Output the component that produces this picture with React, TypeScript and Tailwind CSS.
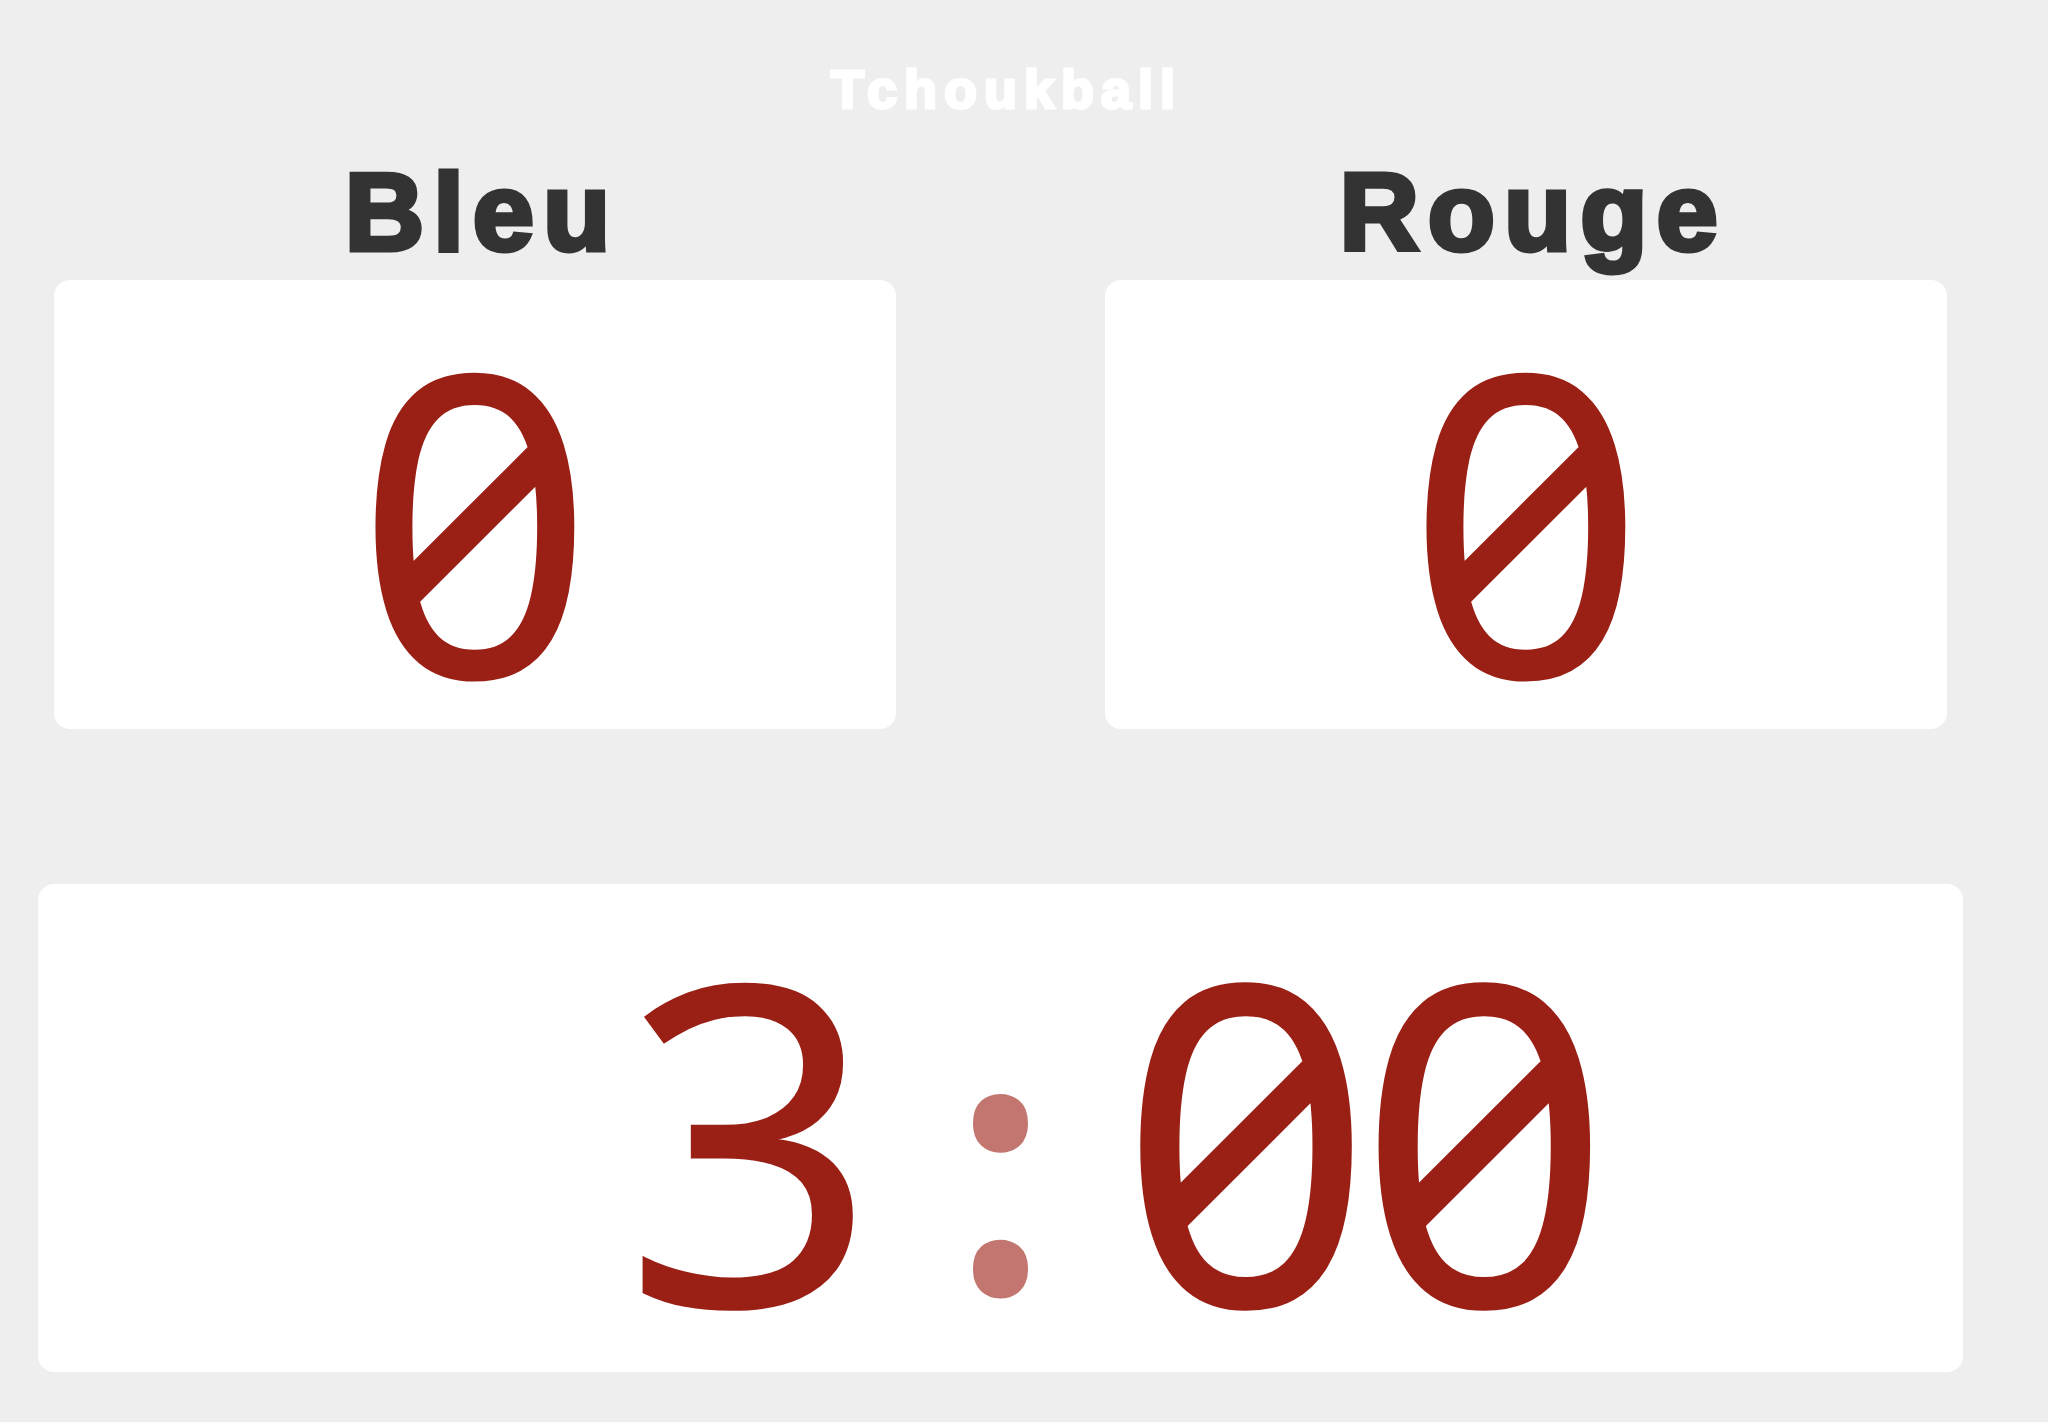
// Tableau de score Tchoukball
const digitFont = "font-['Open_Sans',sans-serif] [font-feature-settings:'zero'_1,'tnum'_1] text-[#9a2016] leading-none [-webkit-text-stroke:3px_#9a2016]";

function TeamScore({ name, score }: { name: string; score: number }) {
  return (
    <div className="flex flex-col items-center w-[842px]">
      <h2 className="mt-[41px] h-[110px] pl-[14px] text-[110px] leading-none font-bold font-['Liberation_Sans',Arial,sans-serif] text-[#333333] tracking-[9px] [-webkit-text-stroke:5px_#333333]">
        {name}
      </h2>
      <div className="mt-[13px] w-full h-[449px] bg-white rounded-2xl flex justify-center pt-[27px]">
        <span className={`${digitFont} text-[416px]`}>{score}</span>
      </div>
    </div>
  );
}

export default function App() {
  return (
    <div className="min-h-screen bg-[#eeeeee] pl-[38px]">
      <div className="w-[1925px] flex flex-col items-center">
        <h1 className="mt-[62px] h-[54px] pl-[12px] text-[54px] leading-none font-bold font-['Liberation_Sans',Arial,sans-serif] text-white tracking-[7px] [-webkit-text-stroke:3px_#ffffff]">
          Tchoukball
        </h1>

        {/* Scores des deux équipes */}
        <div className="w-full px-4 flex justify-between">
          <TeamScore name="Bleu" score={0} />
          <TeamScore name="Rouge" score={0} />
        </div>

        {/* Chrono */}
        <div className="mt-[155px] w-full h-[488px] bg-white rounded-2xl grid grid-cols-[1fr_238px_1fr] items-start pt-[28px]">
          <span className={`${digitFont} text-[443px] justify-self-end pr-[4px]`}>3</span>
          <span className="font-['Open_Sans',sans-serif] text-[336px] leading-none text-[#c2766f] [-webkit-text-stroke:16px_#c2766f] justify-self-center mt-[76px]">:</span>
          <span className={`${digitFont} text-[443px] justify-self-start tracking-[-15px]`}>00</span>
        </div>
      </div>
    </div>
  );
}
